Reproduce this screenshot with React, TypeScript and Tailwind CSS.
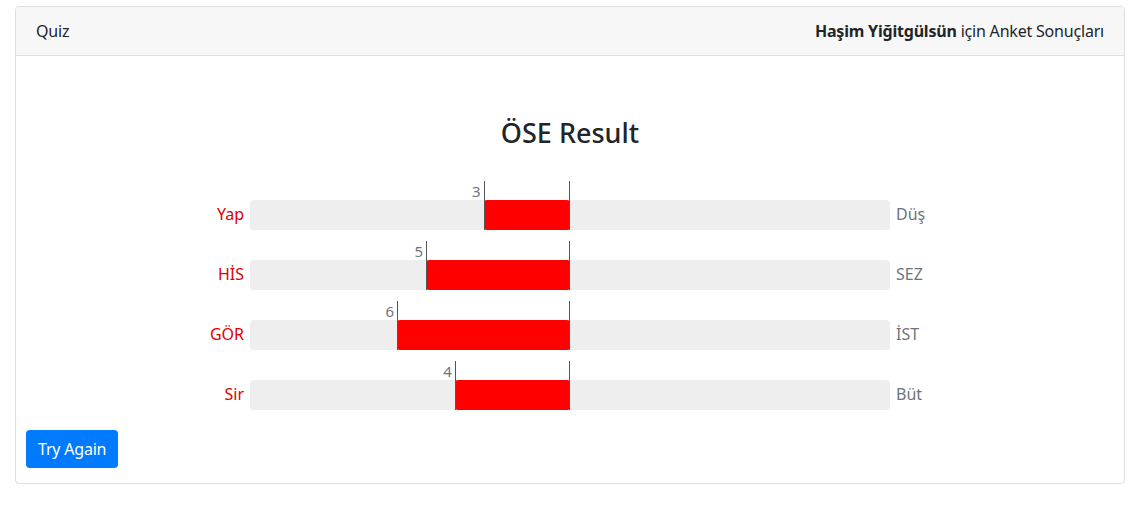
import React from 'react';

const rows = [
  { left: 'Yap', right: 'Düş', value: 3 },
  { left: 'HİS', right: 'SEZ', value: 5 },
  { left: 'GÖR', right: 'İST', value: 6 },
  { left: 'Sir', right: 'Büt', value: 4 },
];

const ResultRow = ({ left, right, value }: { left: string; right: string; value: number }) => {
  const pct = value * 4.5;
  return (
    <div className="grid grid-cols-[1fr_640px_1fr] items-end h-[60px]">
      <div className="h-[30px] flex items-center justify-end pr-[6px] pb-[3px] text-[16px] text-[#e00000]">{left}</div>
      <div className="relative h-[30px] rounded-[4px] bg-[#eeeeee]">
        <div
          className="absolute top-0 bottom-0 rounded-[3px] bg-[#ff0000]"
          style={{ right: '50%', width: `${pct}%` }}
        />
        <div
          className="absolute top-[-19px] bottom-0 w-px bg-[#555555]"
          style={{ left: `${50 - pct}%` }}
        >
          <span className="absolute right-[4px] top-[1px] text-[15px] leading-[18px] text-[#6c757d]">{value}</span>
        </div>
        <div className="absolute top-[-19px] bottom-0 left-[319px] w-px bg-[#555555]" />
      </div>
      <div className="h-[30px] flex items-center pl-[6px] pb-[3px] text-[16px] text-[#6c757d]">{right}</div>
    </div>
  );
};

export default function App() {
  return (
    <div className="bg-white min-h-[508px] pt-[6px] pl-[15px] font-['Noto_Sans','Open_Sans',sans-serif] text-[#212529]">
      <div className="w-[1110px] border border-[#dfdfdf] rounded-[4px] overflow-hidden">
        <div className="flex justify-between items-center px-[20px] py-[12px] leading-[24px] text-[16px] tracking-[-0.2px] bg-[#f7f7f7] border-b border-[#dfdfdf]">
          <span>Quiz</span>
          <span>
            <b className="font-bold">Haşim Yiğitgülsün</b> için Anket Sonuçları
          </span>
        </div>
        <div className="px-[10px] pt-[10px] pb-[15px]">
          <h3 className="mt-[50px] mb-[20px] text-center text-[27px] leading-[34px] font-medium">ÖSE Result</h3>
          <div className="flex flex-col">
            {rows.map((r) => (
              <ResultRow key={r.left} {...r} />
            ))}
          </div>
          <button className="mt-[20px] h-[38px] px-[12px] rounded-[4px] bg-[#007bff] text-white text-[16px] leading-[24px] tracking-[-0.2px]">
            Try Again
          </button>
        </div>
      </div>
    </div>
  );
}
